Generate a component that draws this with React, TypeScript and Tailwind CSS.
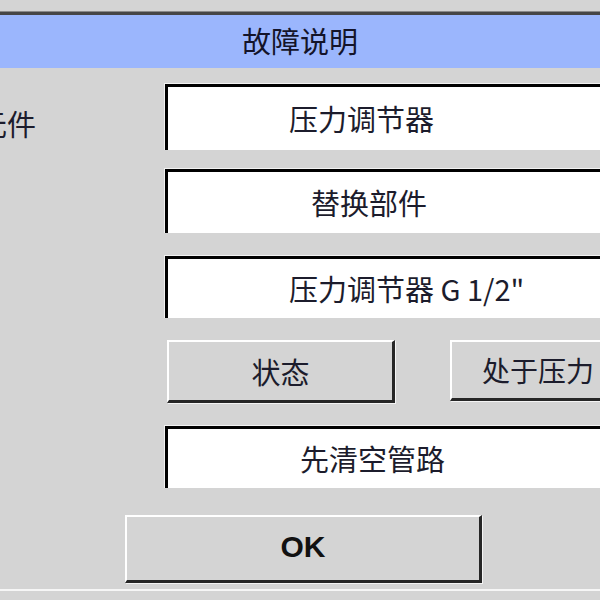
const FONT = "font-['Noto_Sans_CJK_SC','Noto_Sans',sans-serif]";

function Field({ text, pad, h, mt }: { text: string; pad: string; h: string; mt: string }) {
  return (
    <div className={`${mt} ml-[164px] w-[470px] ${h} shrink-0 border-t border-l border-[#f2f2f2]`}>
      <div className="h-full border-t-[3px] border-l-[3px] border-black bg-white flex items-center">
        <span className={`${pad} text-[29px] leading-none text-[#1c1c2c] whitespace-nowrap`}>{text}</span>
      </div>
    </div>
  );
}

function RaisedButton({
  children,
  className,
}: {
  children: React.ReactNode;
  className: string;
}) {
  return (
    <div
      className={`${className} shrink-0 border-t-2 border-l-2 border-white border-r-[3px] border-b-[3px] border-r-[#262626] border-b-[#262626] bg-[#d4d4d4] flex items-center justify-center shadow-[1px_1px_0_#f4f4f4]`}
    >
      {children}
    </div>
  );
}

export default function App() {
  return (
    <div className={`w-[600px] h-[600px] overflow-hidden bg-[#d4d4d4] flex flex-col ${FONT}`}>
      {/* title bar */}
      <div className="h-[11px] shrink-0" />
      <div className="h-[1px] shrink-0 bg-[#8a8a8a]" />
      <div className="h-[3px] shrink-0 bg-[#464646]" />
      <div className="h-[53px] shrink-0 bg-[#9bb6fd] flex items-center justify-center">
        <span className="text-[29px] leading-none text-[#14142a] -mt-[2px]">故障说明</span>
      </div>

      {/* row 1 with label */}
      <div className="relative shrink-0">
        <span className="absolute left-[-22px] top-[41px] text-[29px] leading-none text-[#1c1c2c]">元件</span>
        <Field text="压力调节器" pad="pl-[121px]" h="h-[67px]" mt="mt-[15px]" />
      </div>
      <Field text="替换部件" pad="pl-[143px]" h="h-[65px]" mt="mt-[18px]" />
      <Field text="压力调节器 G 1/2&quot;" pad="pl-[121px]" h="h-[63px]" mt="mt-[22px]" />

      {/* buttons row */}
      <div className="mt-[22px] flex shrink-0">
        <RaisedButton className="ml-[167px] w-[228px] h-[63px]">
          <span className="text-[29px] leading-none text-[#1c1c2c]">状态</span>
        </RaisedButton>
        <RaisedButton className="ml-[55px] w-[200px] h-[61px] !justify-start">
          <span className="pl-[30px] text-[28px] leading-none text-[#1c1c2c] whitespace-nowrap">处于压力</span>
        </RaisedButton>
      </div>

      <Field text="先清空管路" pad="pl-[132px]" h="h-[63px]" mt="mt-[22px]" />

      {/* OK */}
      <RaisedButton className="mt-[27px] ml-[125px] w-[357px] h-[68px]">
        <span className="font-['Liberation_Sans',sans-serif] font-bold text-[30px] leading-none text-[#111] -mt-[3px]">OK</span>
      </RaisedButton>
      <div className="mt-[6px] h-[2px] shrink-0 bg-[#f6f6f6]" />
    </div>
  );
}
